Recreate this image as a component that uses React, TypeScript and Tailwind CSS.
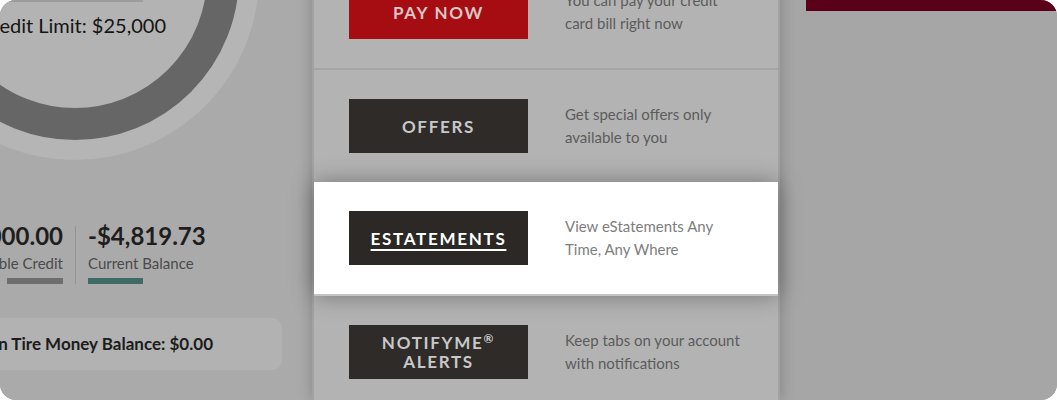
import React from "react";

type Row = {
  label: React.ReactNode;
  text: string[];
  tone: "red" | "dark";
  active?: boolean;
};

const rows: Row[] = [
  { label: "PAY NOW", text: ["You can pay your credit", "card bill right now"], tone: "red" },
  { label: "OFFERS", text: ["Get special offers only", "available to you"], tone: "dark" },
  { label: "ESTATEMENTS", text: ["View eStatements Any", "Time, Any Where"], tone: "dark", active: true },
  {
    label: (
      <>
        NOTIFYME<sup className="text-[12px] top-[-0.5em]">®</sup>
        <br />
        ALERTS
      </>
    ),
    text: ["Keep tabs on your account", "with notifications"],
    tone: "dark",
  },
];

function Donut() {
  // credit usage ring, only the lower part is in view
  return (
    <svg
      className="absolute left-[-109px] top-[-208px]"
      width="368"
      height="368"
      viewBox="0 0 368 368"
    >
      <circle cx="184" cy="184" r="184" fill="#b5b5b5" />
      <circle cx="184" cy="184" r="148" fill="#b3b3b3" stroke="#666666" strokeWidth="32" />
    </svg>
  );
}

function ActionRow({ row }: { row: Row }) {
  const btn = row.tone === "red" ? "bg-[#a50d12] text-[#d9c6c6]" : row.active ? "bg-[#2b2825] text-white" : "bg-[#2f2b28] text-[#c8c8c8]";
  return (
    <div
      className={
        row.active
          ? "relative z-10 -mt-[2px] h-[114px] shrink-0 bg-white border-b-2 border-[#c4c4c4] flex items-center shadow-[0_0_22px_rgba(0,0,0,0.35)]"
          : "h-[114px] shrink-0 border-b-2 border-[#a5a5a5] flex items-center"
      }
    >
      <div
        className={`ml-[35px] w-[179px] h-[54px] shrink-0 flex items-center justify-center text-center text-[17px] leading-[19px] font-bold tracking-[0.1em] ${btn}`}
      >
        <span className={row.active ? "underline underline-offset-[4px] decoration-[1.5px]" : ""}>{row.label}</span>
      </div>
      <div className={`ml-[37px] text-[15px] leading-[23px] ${row.active ? "text-[#7e7e7e]" : "text-[#5c5c5c]"}`}>
        {row.text.map((t) => (
          <div key={t}>{t}</div>
        ))}
      </div>
    </div>
  );
}

export default function App() {
  return (
    <div className="w-[1057px] h-[401px] bg-white" style={{ fontFamily: "Lato, 'Open Sans', sans-serif" }}>
      <div className="h-[400px] rounded-[16px] overflow-hidden flex bg-[#a6a6a6]">
        {/* account summary card */}
        <div className="w-[312px] shrink-0 bg-[#aaaaaa] flex flex-col">
          <div className="relative h-[221px]">
            <Donut />
            <div className="relative ml-[5px] w-[138px] h-[2px] bg-[#9c9c9c]" />
            <div className="relative mt-[9px] w-[166px] flex justify-end whitespace-nowrap text-[20px] leading-[28px] text-[#141414]">
              Credit Limit: $25,000
            </div>
          </div>

          <div className="flex gap-[12px] whitespace-nowrap">
            <div className="w-[63px] flex flex-col items-end">
              <div className="text-[24px] leading-[30px] font-bold text-[#1e1e1e]">$25,000.00</div>
              <div className="mt-[2px] text-[15px] leading-[20px] text-[#4a4a4a]">Available Credit</div>
              <div className="mt-[5px] w-[56px] h-[6px] bg-[#6e6e6e]" />
            </div>
            <div className="w-px mt-[5px] bg-[#939393]" />
            <div className="flex flex-col items-start">
              <div className="text-[24px] leading-[30px] font-bold text-[#1e1e1e]">-$4,819.73</div>
              <div className="mt-[2px] text-[15px] leading-[20px] text-[#4a4a4a]">Current Balance</div>
              <div className="mt-[5px] w-[55px] h-[6px] bg-[#3e6b66]" />
            </div>
          </div>

          <div className="mt-[34px] ml-[-140px] mr-[30px] h-[52px] rounded-[10px] bg-[#b2b2b2] flex items-center justify-end pr-[69px] whitespace-nowrap">
            <span className="text-[17px] font-bold text-[#1c1c1c]">Canadian Tire Money Balance: $0.00</span>
          </div>
        </div>

        {/* quick actions */}
        <div className="relative z-[1] w-[468px] shrink-0 -mt-[44px] bg-[#b3b3b3] border-x-2 border-[#a2a2a2] shadow-[0_0_14px_rgba(0,0,0,0.22)] flex flex-col">
          {rows.map((r, i) => (
            <ActionRow key={i} row={r} />
          ))}
        </div>

        <div className="flex-1 bg-[#a6a6a6]">
          <div className="ml-[26px] h-[11px] bg-[#5a0019] rounded-tr-[12px]" />
        </div>
      </div>
    </div>
  );
}
